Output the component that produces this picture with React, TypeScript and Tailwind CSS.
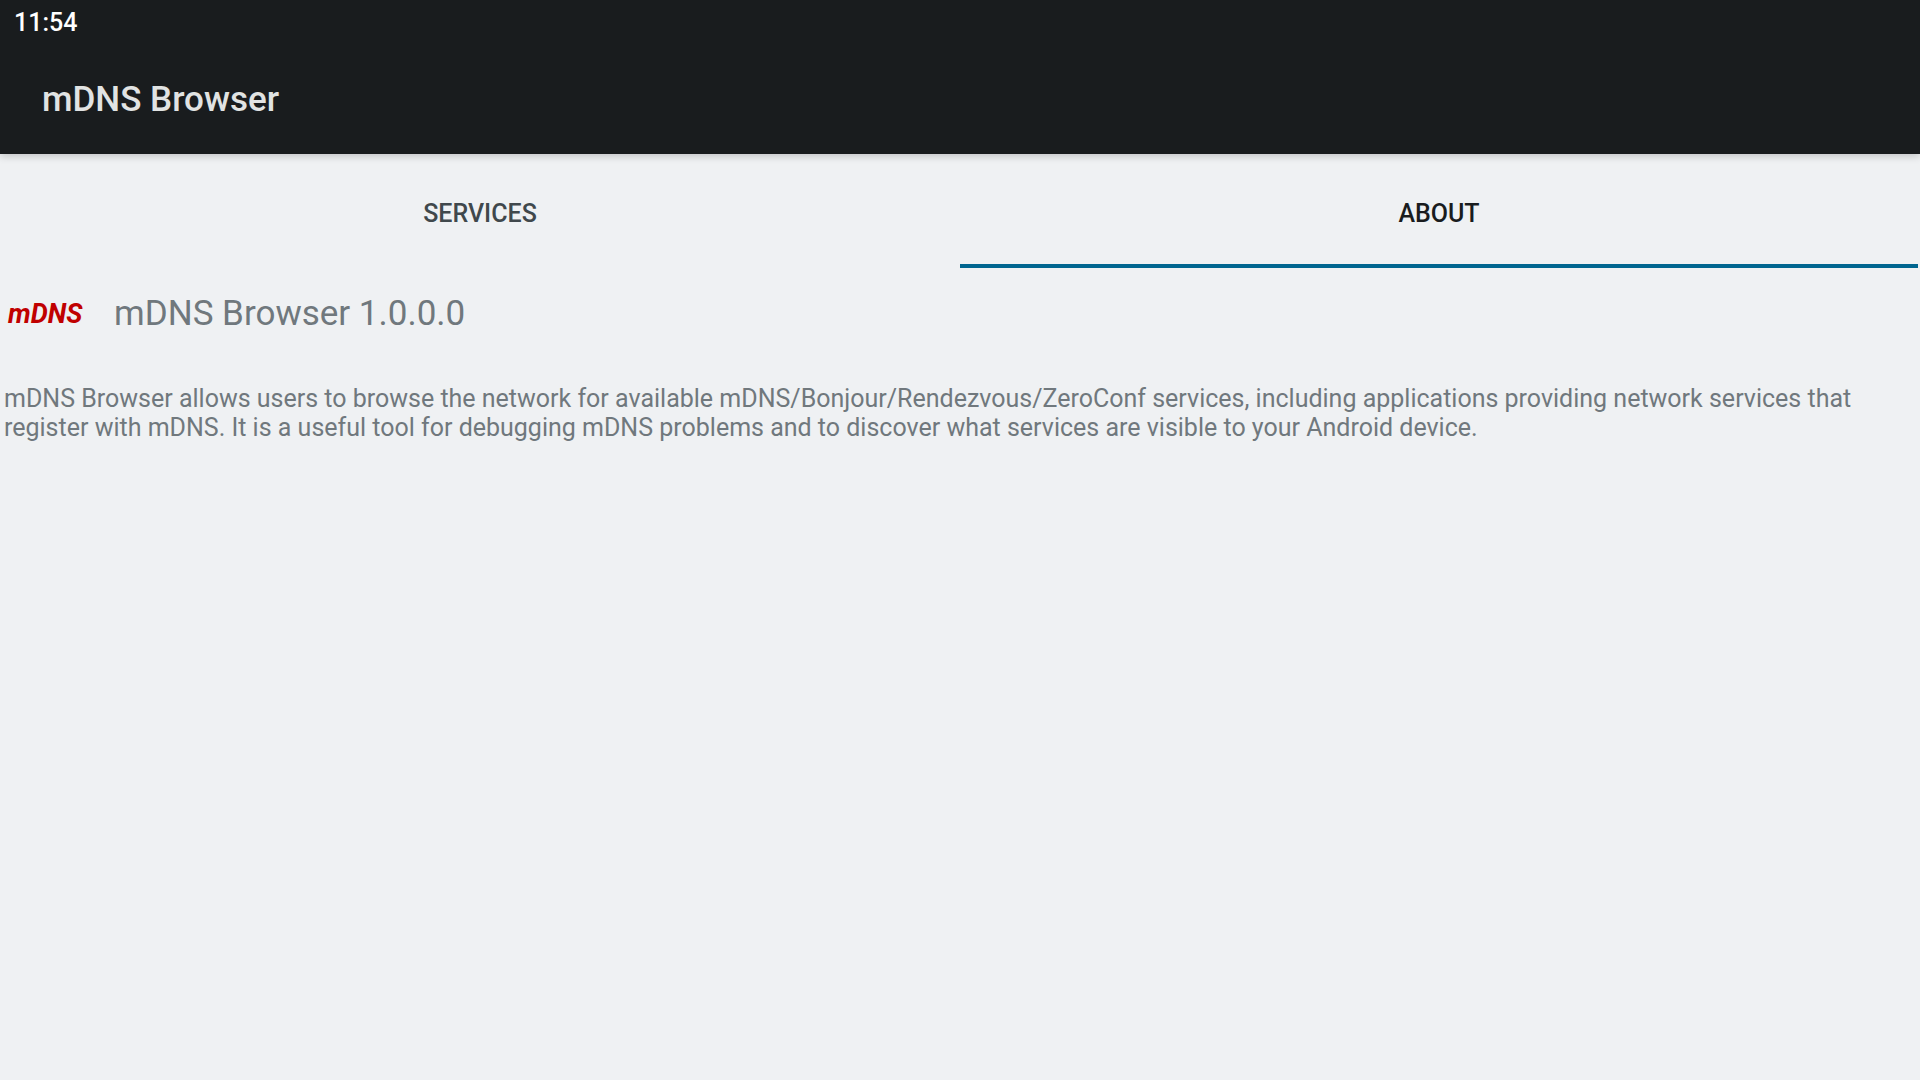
export default function App() {
  return (
    <div className="flex min-h-screen flex-col bg-[#eff1f3] font-[Roboto,sans-serif] text-[#70787d]">
      <header className="bg-[#191c1e] shadow-[0_2px_8px_rgba(0,0,0,0.2)]">
        <div className="flex h-11 items-center px-3.5 pt-0.5">
          <time className="text-[25px] font-medium text-white">11:54</time>
        </div>
        <div className="flex h-[110px] items-center px-[42px] pt-0.5">
          <h1 className="text-[35px] font-medium text-[#e1e3e3]">mDNS Browser</h1>
        </div>
      </header>
      <nav role="tablist" className="grid grid-cols-2">
        <button role="tab" aria-selected="false" className="h-[114px] border-b-4 border-transparent pt-2.5 text-[25px] font-medium text-[#40484c]">SERVICES</button>
        <button role="tab" aria-selected="true" className="mr-0.5 h-[114px] border-b-4 border-[#00658f] pt-2.5 text-[25px] font-medium text-[#191c1e]">ABOUT</button>
      </nav>
      <main>
        <div className="flex h-[92px] items-center">
          <svg viewBox="0 0 96 92" className="h-[92px] w-24" role="img" aria-label="mDNS">
            <text x="8" y="55" className="fill-[#c00000] text-[27px] font-bold italic">mDNS</text>
          </svg>
          <h2 className="pl-[18px] text-[35px]">mDNS Browser 1.0.0.0</h2>
        </div>
        <p className="px-1 pt-6 text-[25px] leading-[29px]">
          mDNS Browser allows users to browse the network for available mDNS/Bonjour/Rendezvous/ZeroConf services, including applications providing network services that register with mDNS. It is a useful tool for debugging mDNS problems and to discover what services are visible to your Android device.
        </p>
      </main>
    </div>
  );
}
